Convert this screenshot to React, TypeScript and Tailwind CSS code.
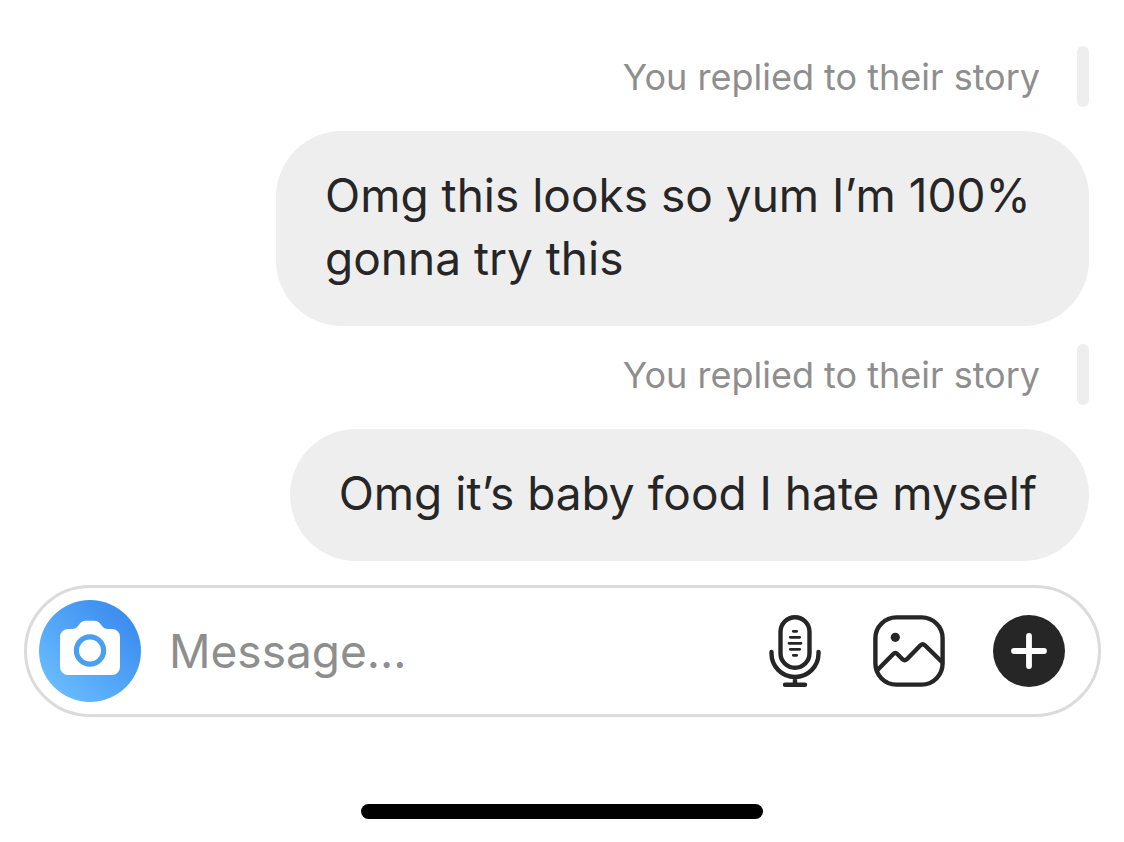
import { useState } from "react";

const messages = [
  { id: 1, text: "Omg this looks so yum I’m 100% gonna try this" },
  { id: 2, text: "Omg it’s baby food I hate myself" },
];

function CameraIcon() {
  return (
    <svg viewBox="0 0 102 102" className="size-full" aria-hidden="true">
      <path
        d="M29 29h4c3 0 4.500-1 6-3l2-2.500c1.500-2 3-2.800 5.500-2.800h9c2.500 0 4 .8 5.500 2.800l2 2.500c1.500 2 3 3 6 3h4a8 8 0 0 1 8 8v30a8 8 0 0 1-8 8H29a8 8 0 0 1-8-8V37a8 8 0 0 1 8-8z"
        fill="#fff"
      />
      <circle cx="51" cy="50.500" r="13.600" fill="#fff" stroke="#4b9ff0" strokeWidth="5.200" />
    </svg>
  );
}

function MicIcon() {
  return (
    <svg
      viewBox="0 0 56 72"
      className="h-[72px] w-14"
      fill="none"
      stroke="#262626"
      strokeWidth="4.400"
      strokeLinecap="round"
      aria-hidden="true"
    >
      <rect x="11.500" y="2.200" width="29" height="50.600" rx="14.500" />
      <path d="M2.500 37v1.500a23.500 23.500 0 0 0 47 0V37M26 62v7.500M16 69.700h20" />
      <path d="M24.300 16.300h3.400M21.300 22.300h9.400M20 28.300h12M21.300 34.300h9.400M24.300 40.300h3.400" strokeWidth="2.800" />
    </svg>
  );
}

function GalleryIcon() {
  return (
    <svg
      viewBox="0 0 72 72"
      className="size-[72px]"
      fill="none"
      stroke="#262626"
      strokeWidth="4.400"
      strokeLinecap="round"
      strokeLinejoin="round"
      aria-hidden="true"
    >
      <rect x="2.400" y="2.400" width="67.200" height="67.200" rx="21" />
      <path d="M4.500 55 20.300 39q2-2 4 0l5.200 5.200q2.200 2 4.400 0L47.500 30.300q2.200-2 4.400 0L68.500 46.500" />
      <circle cx="22.300" cy="22.300" r="4.600" fill="#262626" stroke="none" />
    </svg>
  );
}

function PlusIcon() {
  return (
    <svg viewBox="0 0 72 72" className="size-[72px]" aria-hidden="true">
      <path d="M36 21v30M21 36h30" stroke="#fff" strokeWidth="5.800" strokeLinecap="round" />
    </svg>
  );
}

function StoryReply({ text }: { text: string }) {
  return (
    <li className="flex flex-col items-end gap-6">
      <div className="flex h-[61px] items-center gap-[37px]">
        <p className="text-[36px] leading-[44px] text-[#8e8e8e]">You replied to their story</p>
        <span className="h-full w-3 rounded-md bg-[#eeeeee]" />
      </div>
      <p className="max-w-[813px] rounded-[66px] bg-[#eeeeee] pt-[33px] pr-[52px] pb-9 pl-[49px] text-[46px] leading-[63px] text-[#262626]">
        {text}
      </p>
    </li>
  );
}

function App() {
  const [inputMsgValue, setInputMsgValue] = useState("");

  return (
    <div className="flex min-h-screen flex-col bg-white pt-[46px] font-['Inter',sans-serif]">
      <ul className="flex flex-col gap-[18px] pr-[35px] pl-6">
        {messages.map((msg) => (
          <StoryReply key={msg.id} text={msg.text} />
        ))}
      </ul>
      <form
        className="mt-6 mr-[23px] ml-6 flex h-[132px] items-center rounded-full border-[3px] border-[#dbdbdb] pr-[33px] pl-3"
        onSubmit={(event) => event.preventDefault()}
      >
        <button
          type="button"
          aria-label="Camera"
          className="size-[102px] shrink-0 rounded-full bg-linear-to-tr from-[#70c4ff] to-[#3483ec]"
        >
          <CameraIcon />
        </button>
        <input
          type="text"
          aria-label="Message"
          placeholder="Message..."
          className="ml-7 min-w-0 flex-1 text-[46px] leading-[63px] text-[#262626] outline-none placeholder:text-[#8e8e8e]"
          value={inputMsgValue}
          onChange={(event) => setInputMsgValue(event.target.value)}
        />
        <div className="flex shrink-0 items-center gap-12">
          <button type="button" aria-label="Voice message">
            <MicIcon />
          </button>
          <button type="button" aria-label="Photos">
            <GalleryIcon />
          </button>
          <button type="button" aria-label="More" className="rounded-full bg-[#262626]">
            <PlusIcon />
          </button>
        </div>
      </form>
      <div className="mx-auto mt-auto mb-[23px] h-[15px] w-[402px] rounded-full bg-black" />
    </div>
  );
}

export default App;
